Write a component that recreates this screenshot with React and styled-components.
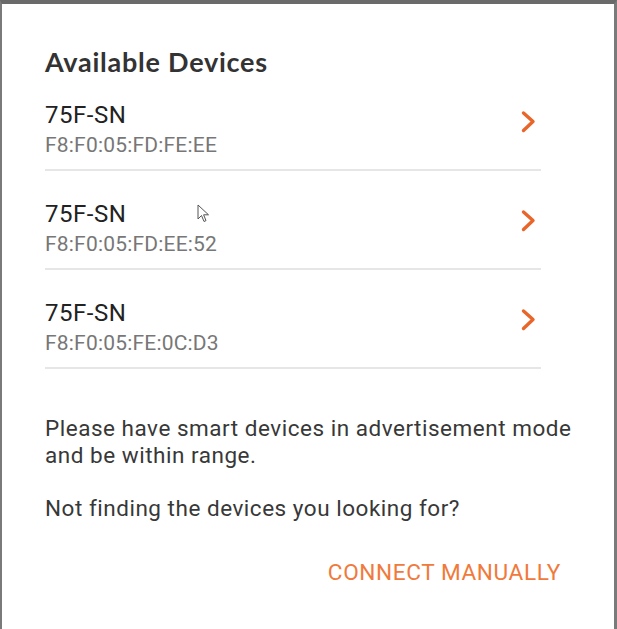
import React from 'react'
import styled, { createGlobalStyle } from 'styled-components'

const devices = [
  { name: '75F-SN', mac: 'F8:F0:05:FD:FE:EE' },
  { name: '75F-SN', mac: 'F8:F0:05:FD:EE:52' },
  { name: '75F-SN', mac: 'F8:F0:05:FE:0C:D3' }
]

const GlobalStyle = createGlobalStyle`
  html, body {
    margin: 0;
    padding: 0;
    background: #ffffff;
  }
  * {
    box-sizing: border-box;
  }
`

const Frame = styled.div`
  position: relative;
  width: 617px;
  height: 629px;
  overflow: hidden;
  background: #ffffff;
  border-top: 4px solid #6a6a6a;
  border-left: 2px solid #7a7a7a;
  border-right: 3px solid #7a7a7a;
  padding: 43px 38px 0 43px;
  font-family: Roboto, 'Liberation Sans', sans-serif;
`

const Title = styled.h2`
  margin: 0;
  font-family: Lato, 'Open Sans', sans-serif;
  font-weight: 700;
  font-size: 27px;
  line-height: 30px;
  color: #333333;
  letter-spacing: 0.75px;
`

const List = styled.div`
  width: 496px;
  display: flex;
  flex-direction: column;
`

const Row = styled.div`
  display: flex;
  align-items: center;
  padding: 28px 0 11px;
  border-bottom: 2px solid #e6e6e6;
  cursor: pointer;
  &:first-child {
    padding-top: 23px;
  }
`

const Info = styled.div`
  flex: 1;
  display: flex;
  flex-direction: column;
  gap: 2px;
`

const Name = styled.div`
  font-size: 24px;
  line-height: 30px;
  color: #222222;
  letter-spacing: 0.5px;
`

const Mac = styled.div`
  font-size: 21px;
  line-height: 26px;
  color: #777777;
  letter-spacing: 0.2px;
`

const Chevron = styled.svg`
  width: 16px;
  height: 24px;
  margin: 0 5px 16px 0;
  flex-shrink: 0;
`

const Note = styled.p`
  margin: ${p => p.$top}px 0 0;
  font-size: 22.5px;
  line-height: 27px;
  color: #383838;
  letter-spacing: 0.52px;
`

const Footer = styled.div`
  display: flex;
  justify-content: flex-end;
  margin-top: 37px;
  padding-right: 15px;
`

const TextButton = styled.button`
  border: 0;
  background: none;
  padding: 0;
  font-family: Roboto, 'Liberation Sans', sans-serif;
  font-size: 22.6px;
  line-height: 28px;
  color: #f07a3c;
  text-transform: uppercase;
  letter-spacing: 0.6px;
  cursor: pointer;
`

const Pointer = styled.svg`
  position: absolute;
  left: 195px;
  top: 200px;
  width: 14px;
  height: 20px;
`

const ChevronIcon = () => (
  <Chevron viewBox="0 0 16 24">
    <polyline
      points="3.5,4 13,12.5 3.5,21.5"
      fill="none"
      stroke="#e9662b"
      strokeWidth="3.4"
      strokeLinejoin="round"
      strokeLinecap="round"
    />
  </Chevron>
)

const App = () => (
  <>
    <GlobalStyle />
    <Frame>
      <Title>Available Devices</Title>
      <List>
        {devices.map(d => (
          <Row key={d.mac}>
            <Info>
              <Name>{d.name}</Name>
              <Mac>{d.mac}</Mac>
            </Info>
            <ChevronIcon />
          </Row>
        ))}
      </List>
      <Note $top={46}>
        Please have smart devices in advertisement mode and be within range.
      </Note>
      <Note $top={26}>Not finding the devices you looking for?</Note>
      <Footer>
        <TextButton>Connect Manually</TextButton>
      </Footer>
      <Pointer viewBox="0 0 14 20">
        <path
          d="M1 1 L1 15 L4.5 11.5 L7 17.5 L9 16.6 L6.6 10.8 L11.5 10.8 Z"
          fill="#ffffff"
          stroke="#555555"
          strokeWidth="1"
          strokeLinejoin="round"
        />
      </Pointer>
    </Frame>
  </>
)

export default App
